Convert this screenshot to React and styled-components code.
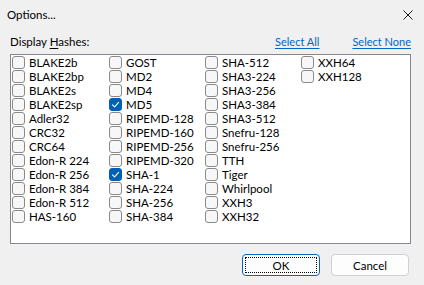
import React from "react";
import styled, { createGlobalStyle } from "styled-components";

const Global = createGlobalStyle`
  html, body { margin: 0; padding: 0; background: #f0f0f0; }
  body { font-family: Lato, "Noto Sans", "DejaVu Sans", sans-serif; font-size: 11.5px; color: #000; }
`;

const Window = styled.div`
  width: 424px;
  height: 285px;
  background: #f0f0f0;
  display: flex;
  flex-direction: column;
  box-sizing: border-box;
  overflow: hidden;
`;

const TitleBar = styled.div`
  height: 29px;
  display: flex;
  align-items: center;
  justify-content: space-between;
  padding-left: 7px;
  padding-right: 10px;
`;

const Title = styled.span`
  font-size: 11.5px;
  color: #000;
`;

const Close = styled.div`
  width: 12px;
  height: 12px;
  display: flex;
  align-items: center;
  justify-content: center;
`;

const Body = styled.div`
  padding: 0 13px 0 10px;
  display: flex;
  flex-direction: column;
`;

const HeaderRow = styled.div`
  height: 25px;
  display: flex;
  align-items: center;
`;

const Label = styled.span`
  flex: 1;
  u { text-decoration: underline; text-underline-offset: 2px; }
`;

const LinkText = styled.a`
  color: #0066cc;
  font-size: 11px;
  text-decoration: underline;
  text-underline-offset: 2px;
  margin-left: ${(p) => p.$gap}px;
  cursor: pointer;
`;

const ListBox = styled.div`
  height: 190px;
  box-sizing: border-box;
  border: 1px solid #828790;
  background: #fff;
  padding: 0 0 0 1px;
  display: grid;
  grid-auto-flow: column;
  grid-template-rows: repeat(12, 14px);
  grid-template-columns: 97px 96px 96px 96px;
  align-content: start;
`;

const Item = styled.label`
  display: flex;
  align-items: center;
  gap: 4px;
  height: 14px;
  white-space: nowrap;
  font-size: 11.5px;
  line-height: 13px;
`;

const Box = styled.span`
  width: 11px;
  height: 11px;
  border-radius: 3px;
  border: 1px solid ${(p) => (p.$checked ? "#005fb8" : "#8a8a8a")};
  background: ${(p) => (p.$checked ? "#005fb8" : "#f7f7f7")};
  display: flex;
  align-items: center;
  justify-content: center;
  flex: none;
`;

const ButtonRow = styled.div`
  display: flex;
  justify-content: flex-end;
  gap: 11px;
  margin-top: 10px;
  padding-right: 2px;
`;

const Button = styled.button`
  width: 78px;
  height: 22px;
  box-sizing: border-box;
  border-radius: 4px;
  font-family: inherit;
  font-size: 11.5px;
  color: #000;
  background: #fdfdfd;
  border: 1px solid ${(p) => (p.$primary ? "#0067c0" : "#d0d0d0")};
  padding: 2px;
  display: flex;
  align-items: stretch;
`;

const Focus = styled.span`
  flex: 1;
  display: flex;
  align-items: center;
  justify-content: center;
  border: 1px ${(p) => (p.$focus ? "dotted #000" : "solid transparent")};
`;

const columns = [
  ["BLAKE2b", "BLAKE2bp", "BLAKE2s", "BLAKE2sp", "Adler32", "CRC32", "CRC64", "Edon-R 224", "Edon-R 256", "Edon-R 384", "Edon-R 512", "HAS-160"],
  ["GOST", "MD2", "MD4", "MD5", "RIPEMD-128", "RIPEMD-160", "RIPEMD-256", "RIPEMD-320", "SHA-1", "SHA-224", "SHA-256", "SHA-384"],
  ["SHA-512", "SHA3-224", "SHA3-256", "SHA3-384", "SHA3-512", "Snefru-128", "Snefru-256", "TTH", "Tiger", "Whirlpool", "XXH3", "XXH32"],
  ["XXH64", "XXH128"],
];
const checked = new Set(["MD5", "SHA-1"]);

function Check() {
  return (
    <svg width="9" height="9" viewBox="0 0 9 9">
      <path d="M1.5 4.8 L3.6 6.8 L7.6 2.3" fill="none" stroke="#fff" strokeWidth="1.1" strokeLinecap="round" strokeLinejoin="round" />
    </svg>
  );
}

export default function App() {
  const items = columns.flat();
  return (
    <>
      <Global />
      <Window>
        <TitleBar>
          <Title>Options...</Title>
          <Close>
            <svg width="10" height="10" viewBox="0 0 10 10">
              <path d="M0.5 0.5 L9.5 9.5 M9.5 0.5 L0.5 9.5" stroke="#1a1a1a" strokeWidth="1" />
            </svg>
          </Close>
        </TitleBar>
        <Body>
          <HeaderRow>
            <Label>
              Display <u>H</u>ashes:
            </Label>
            <LinkText $gap={0}>Select All</LinkText>
            <LinkText $gap={33}>Select None</LinkText>
          </HeaderRow>
          <ListBox>
            {items.map((name) => (
              <Item key={name}>
                <Box $checked={checked.has(name)}>{checked.has(name) && <Check />}</Box>
                {name}
              </Item>
            ))}
          </ListBox>
          <ButtonRow>
            <Button $primary>
              <Focus $focus>OK</Focus>
            </Button>
            <Button>
              <Focus>Cancel</Focus>
            </Button>
          </ButtonRow>
        </Body>
      </Window>
    </>
  );
}
